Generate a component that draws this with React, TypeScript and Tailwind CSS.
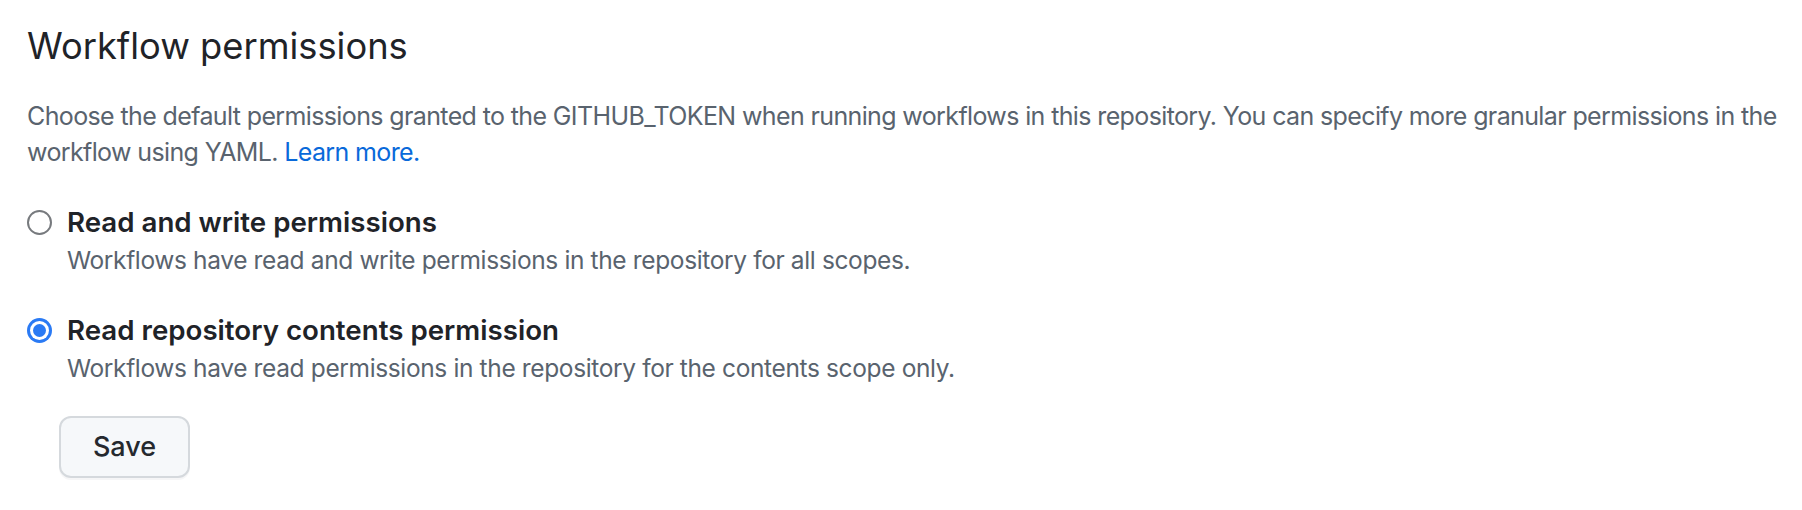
import { useState } from 'react';

type Option = {
  id: 'write' | 'read';
  label: string;
  note: string;
};

const options: Option[] = [
  {
    id: 'write',
    label: 'Read and write permissions',
    note: 'Workflows have read and write permissions in the repository for all scopes.',
  },
  {
    id: 'read',
    label: 'Read repository contents permission',
    note: 'Workflows have read permissions in the repository for the contents scope only.',
  },
];

function Radio({ checked }: { checked: boolean }) {
  if (checked) {
    return (
      <span className="w-[25px] h-[25px] shrink-0 rounded-full bg-[#2a7af4] flex items-center justify-center">
        <span className="w-[19px] h-[19px] rounded-full bg-white flex items-center justify-center">
          <span className="w-[13px] h-[13px] rounded-full bg-[#2a7af4]" />
        </span>
      </span>
    );
  }
  return <span className="w-[25px] h-[25px] shrink-0 rounded-full border-2 border-[#777a7e] bg-white" />;
}

export default function App() {
  const [value, setValue] = useState<Option['id']>('read');

  return (
    <div className="w-[1802px] h-[510px] bg-white pl-[27px] pt-[22px] font-['Inter',sans-serif]">
      <h2 className="text-[36.3px] leading-[48px] font-normal text-[#1f2328]">Workflow permissions</h2>

      <p className="mt-[28px] text-[25px] tracking-[-0.025em] leading-[36px] text-[#59636e]">
        Choose the default permissions granted to the GITHUB_TOKEN when running workflows in this repository. You can
        specify more granular permissions in the workflow using YAML.{' '}
        <a href="#" className="text-[#0969da]">
          Learn more.
        </a>
      </p>

      <div className="mt-[34px] flex flex-col gap-[36px]">
        {options.map((o) => (
          <label key={o.id} className="flex gap-[15px] cursor-pointer" onClick={() => setValue(o.id)}>
            <span className="h-[36px] flex items-center">
              <Radio checked={value === o.id} />
            </span>
            <span className="flex flex-col">
              <span className="text-[27.7px] leading-[36px] font-semibold text-[#1f2328]">{o.label}</span>
              <span className="mt-[4px] text-[24.5px] tracking-[-0.015em] leading-[32px] text-[#59636e]">{o.note}</span>
            </span>
          </label>
        ))}
      </div>

      <button className="mt-[32px] ml-[32px] w-[131px] h-[62px] rounded-[12px] border-2 border-[#d5d9dd] bg-[#f6f8fa] shadow-[0_2px_0_rgba(31,35,40,0.04)] text-[27px] font-medium text-[#25292e]">
        Save
      </button>
    </div>
  );
}
